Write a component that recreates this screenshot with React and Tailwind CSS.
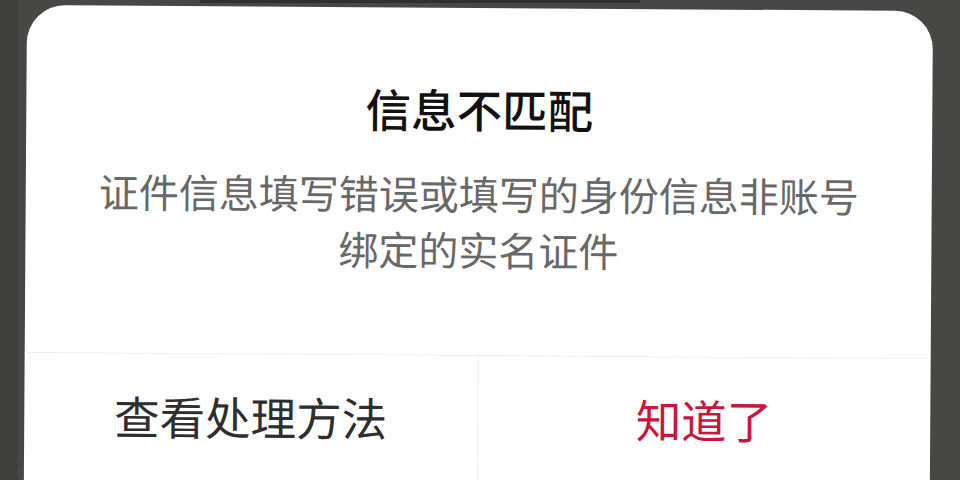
import React from 'react';

const cjk = { fontFamily: '"Noto Sans CJK SC", "Noto Sans", sans-serif' };

const MismatchDialog = () => (
  <div
    className="mt-[5px] ml-[27px] w-[906px] h-[520px] bg-white rounded-[38px] flex flex-col rotate-[0.38deg] origin-top-left"
    style={cjk}
  >
    <div className="pt-[72px] text-center text-[45.5px] leading-[57px] font-medium text-[#111]">
      信息不匹配
    </div>
    <div className="mt-[28px] text-center text-[40px] leading-[56px] text-[#686868]">
      证件信息填写错误或填写的身份信息非账号
      <br />
      绑定的实名证件
    </div>
    <div className="mt-[78px] flex flex-1 border-t border-[#efefef]">
      <button className="flex-1 h-[122px] text-[45.5px] text-[#2e2e2e]">查看处理方法</button>
      <div className="w-px bg-[#f0f0f0]" />
      <button className="flex-1 h-[122px] text-[45.5px] text-[#c8163e]">知道了</button>
    </div>
  </div>
);

const App = () => (
  <div className="relative w-[960px] h-[480px] overflow-hidden bg-[#474846]">
    {/* bits of the page behind the dialog */}
    <div className="absolute top-0 left-[200px] w-[440px] h-[3px] bg-[#2a2a2a] opacity-80" />
    <div className="absolute inset-y-0 left-0 w-[18px] bg-[#3f403e]" />
    <div className="relative">
      <MismatchDialog />
    </div>
  </div>
);

export default App;
